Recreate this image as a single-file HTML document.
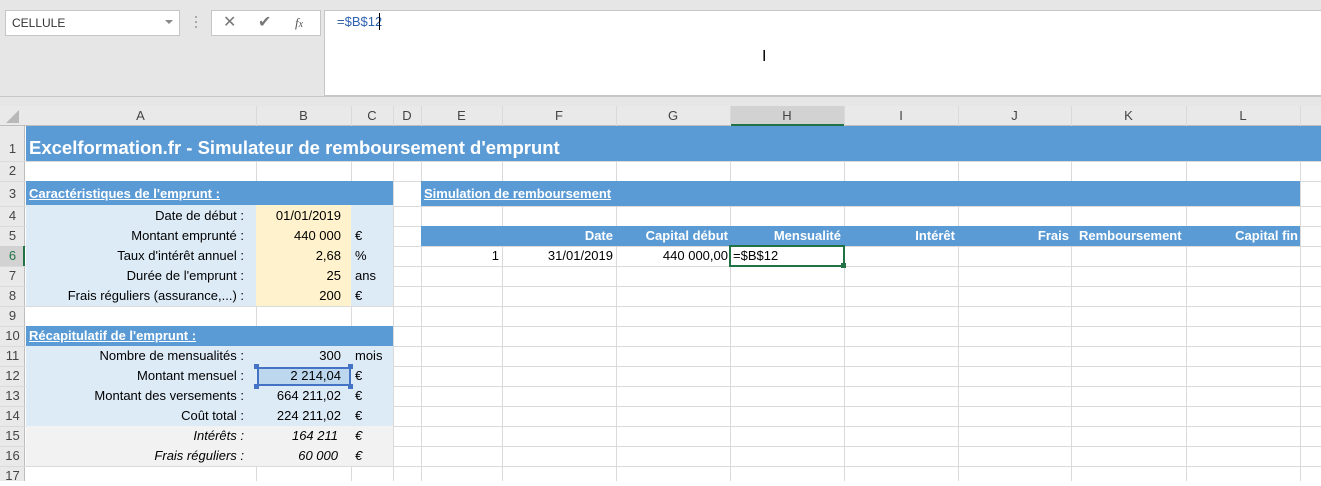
<!DOCTYPE html>
<html><head><meta charset="utf-8"><style>
*{margin:0;padding:0;box-sizing:border-box}
body{width:1321px;height:481px;overflow:hidden;background:#fff;font-family:"Liberation Sans",sans-serif;position:relative;font-size:13px;color:#000}
div{position:absolute}
.t{white-space:nowrap;line-height:20px}
.r{text-align:right}
.vl{width:1px;background:#dadada;top:106px;height:375px}
.hl{height:1px;background:#dadada;left:0;width:1321px}
.ch{top:106px;height:20px;line-height:20px;text-align:center;color:#444;font-size:13px}
.rh{left:0;width:25px;text-align:center;color:#444;font-size:13px}
.blue{background:#5b9bd5}
.lb{background:#ddebf7}
.w{color:#fff;font-weight:bold}
.u{text-decoration:underline}
</style></head><body>
<div style="left:0;top:0;width:1321px;height:106px;background:#e6e6e6"></div>
<div style="left:5px;top:10px;width:175px;height:26px;background:#fff;border:1px solid #c6c6c6"></div>
<div class="t" style="left:12px;top:13px;font-size:12px;color:#333">CELLULE</div>
<div style="left:165px;top:20px;width:0;height:0;border-left:4px solid transparent;border-right:4px solid transparent;border-top:4px solid #888"></div>
<div style="left:195px;top:16px;width:2px;height:2px;background:#aaa"></div>
<div style="left:195px;top:21px;width:2px;height:2px;background:#aaa"></div>
<div style="left:195px;top:26px;width:2px;height:2px;background:#aaa"></div>
<div style="left:211px;top:10px;width:110px;height:26px;background:#fff;border:1px solid #c6c6c6"></div>
<div class="t" style="left:223px;top:13px;font-size:16px;color:#777">✕</div>
<div class="t" style="left:258px;top:13px;font-size:16px;color:#777">✔</div>
<div class="t" style="left:295px;top:13px;font-size:13px;color:#555;font-family:'Liberation Serif',serif;font-style:italic">f<span style="font-size:10px">x</span></div>
<div style="left:324px;top:10px;width:997px;height:86px;background:#fff;border:1px solid #c6c6c6;border-right:none"></div>
<div class="t" style="left:337px;top:12px;font-size:13px;color:#2e5f9a">=<span style="color:#2e62b0">$B$12</span></div>
<div style="left:379px;top:13px;width:1px;height:17px;background:#000"></div>
<div class="t" style="left:762px;top:47px;font-size:16px;color:#000">I</div>
<div style="left:0;top:96px;width:1321px;height:1px;background:#c6c6c6"></div>
<div style="left:0;top:106px;width:1321px;height:20px;background:#e9e9e9;border-bottom:1px solid #bdbdbd"></div>
<div style="left:0;top:126px;width:25px;height:355px;background:#e9e9e9;border-right:1px solid #bdbdbd"></div>
<div style="left:6px;top:110px;width:0;height:0;border-left:13px solid transparent;border-bottom:13px solid #b8b8b8"></div>
<div style="left:730px;top:106px;width:114px;height:20px;background:#d2d2d2;border-bottom:2px solid #217346"></div>
<div class="vl" style="left:256px"></div><div class="vl" style="left:351px"></div><div class="vl" style="left:393px"></div><div class="vl" style="left:421px"></div><div class="vl" style="left:502px"></div><div class="vl" style="left:616px"></div><div class="vl" style="left:730px"></div><div class="vl" style="left:844px"></div><div class="vl" style="left:958px"></div><div class="vl" style="left:1071px"></div><div class="vl" style="left:1186px"></div><div class="vl" style="left:1300px"></div>
<div class="hl" style="top:161px"></div><div class="hl" style="top:181px"></div><div class="hl" style="top:206px"></div><div class="hl" style="top:226px"></div><div class="hl" style="top:246px"></div><div class="hl" style="top:266px"></div><div class="hl" style="top:286px"></div><div class="hl" style="top:306px"></div><div class="hl" style="top:326px"></div><div class="hl" style="top:346px"></div><div class="hl" style="top:366px"></div><div class="hl" style="top:386px"></div><div class="hl" style="top:406px"></div><div class="hl" style="top:426px"></div><div class="hl" style="top:446px"></div><div class="hl" style="top:466px"></div>
<div class="ch" style="left:25px;width:231px">A</div><div class="ch" style="left:256px;width:95px">B</div><div class="ch" style="left:351px;width:42px">C</div><div class="ch" style="left:393px;width:28px">D</div><div class="ch" style="left:421px;width:81px">E</div><div class="ch" style="left:502px;width:114px">F</div><div class="ch" style="left:616px;width:114px">G</div><div class="ch" style="left:730px;width:114px">H</div><div class="ch" style="left:844px;width:114px">I</div><div class="ch" style="left:958px;width:113px">J</div><div class="ch" style="left:1071px;width:115px">K</div><div class="ch" style="left:1186px;width:114px">L</div>
<div class="rh t" style="top:139px">1</div><div class="rh t" style="top:161px">2</div><div class="rh t" style="top:184px">3</div><div class="rh t" style="top:206px">4</div><div class="rh t" style="top:226px">5</div><div class="rh t" style="top:246px;background:#d2d2d2;color:#217346">6</div><div style="left:23px;top:246px;width:2px;height:20px;background:#217346"></div><div class="rh t" style="top:266px">7</div><div class="rh t" style="top:286px">8</div><div class="rh t" style="top:306px">9</div><div class="rh t" style="top:326px">10</div><div class="rh t" style="top:346px">11</div><div class="rh t" style="top:366px">12</div><div class="rh t" style="top:386px">13</div><div class="rh t" style="top:406px">14</div><div class="rh t" style="top:426px">15</div><div class="rh t" style="top:446px">16</div><div class="rh t" style="top:466px">17</div>
<div class="blue" style="left:26px;top:126px;width:1295px;height:35px"></div>
<div class="t w" style="left:29px;top:138px;font-size:18.5px;line-height:20px">Excelformation.fr - Simulateur de remboursement d'emprunt</div>
<div class="blue" style="left:26px;top:181px;width:367px;height:24px"></div>
<div class="t w u" style="left:29px;top:184px">Caractéristiques de l'emprunt :</div>
<div class="blue" style="left:421px;top:181px;width:879px;height:25px"></div>
<div class="t w u" style="left:424px;top:184px">Simulation de remboursement</div>
<div class="lb" style="left:26px;top:205px;width:367px;height:101px"></div>
<div style="left:256px;top:205px;width:95px;height:101px;background:#fff2cc"></div>
<div class="blue" style="left:26px;top:326px;width:367px;height:20px"></div>
<div class="t w u" style="left:29px;top:326px">Récapitulatif de l'emprunt :</div>
<div class="lb" style="left:26px;top:346px;width:367px;height:80px"></div>
<div style="left:26px;top:426px;width:367px;height:40px;background:#f2f2f2"></div>
<div class="blue" style="left:421px;top:226px;width:879px;height:20px"></div>
<div class="t r" style="right:1077px;top:206px">Date de début :</div>
<div class="t r" style="right:1077px;top:226px">Montant emprunté :</div>
<div class="t r" style="right:1077px;top:246px">Taux d'intérêt annuel :</div>
<div class="t r" style="right:1077px;top:266px">Durée de l'emprunt :</div>
<div class="t r" style="right:1077px;top:286px">Frais réguliers (assurance,...) :</div>
<div class="t r" style="right:980px;top:206px">01/01/2019</div>
<div class="t r" style="right:980px;top:226px">440 000</div>
<div class="t r" style="right:980px;top:246px">2,68</div>
<div class="t r" style="right:980px;top:266px">25</div>
<div class="t r" style="right:980px;top:286px">200</div>
<div class="t" style="left:355px;top:226px">€</div><div class="t" style="left:355px;top:246px">%</div><div class="t" style="left:355px;top:266px">ans</div><div class="t" style="left:355px;top:286px">€</div>
<div class="t r" style="right:1077px;top:346px">Nombre de mensualités :</div>
<div class="t r" style="right:1077px;top:366px">Montant mensuel :</div>
<div class="t r" style="right:1077px;top:386px">Montant des versements :</div>
<div class="t r" style="right:1077px;top:406px">Coût total :</div>
<div class="t r" style="right:1077px;top:426px;font-style:italic">Intérêts :</div>
<div class="t r" style="right:1077px;top:446px;font-style:italic">Frais réguliers :</div>
<div style="left:257px;top:367px;width:94px;height:19px;background:#bdd7ee;border:2px solid #4472c4"></div>
<div style="left:254px;top:364px;width:5px;height:5px;background:#4472c4"></div><div style="left:348px;top:364px;width:5px;height:5px;background:#4472c4"></div><div style="left:254px;top:384px;width:5px;height:5px;background:#4472c4"></div><div style="left:348px;top:384px;width:5px;height:5px;background:#4472c4"></div>
<div class="t r" style="right:980px;top:346px">300</div>
<div class="t r" style="right:980px;top:366px">2 214,04</div>
<div class="t r" style="right:980px;top:386px">664 211,02</div>
<div class="t r" style="right:980px;top:406px">224 211,02</div>
<div class="t r" style="right:983px;top:426px;font-style:italic">164 211</div>
<div class="t r" style="right:983px;top:446px;font-style:italic">60 000</div>
<div class="t" style="left:355px;top:346px">mois</div><div class="t" style="left:355px;top:366px">€</div><div class="t" style="left:355px;top:386px">€</div><div class="t" style="left:355px;top:406px">€</div><div class="t" style="left:355px;top:426px;font-style:italic">€</div><div class="t" style="left:355px;top:446px;font-style:italic">€</div>
<div class="t w r" style="right:708px;top:226px">Date</div>
<div class="t w r" style="right:593px;top:226px">Capital début</div>
<div class="t w r" style="right:480px;top:226px">Mensualité</div>
<div class="t w r" style="right:366px;top:226px">Intérêt</div>
<div class="t w r" style="right:252px;top:226px">Frais</div>
<div class="t w" style="left:1079px;top:226px">Remboursement</div>
<div class="t w r" style="right:23px;top:226px">Capital fin</div>
<div class="t r" style="right:822px;top:246px">1</div>
<div class="t r" style="right:708px;top:246px">31/01/2019</div>
<div class="t r" style="right:593px;top:246px">440 000,00</div>
<div style="left:729px;top:245px;width:116px;height:22px;border:2px solid #217346;background:#fff"></div>
<div style="left:841px;top:263px;width:5px;height:5px;background:#217346"></div>
<div class="t" style="left:733px;top:246px">=$B$12</div>
</body></html>
